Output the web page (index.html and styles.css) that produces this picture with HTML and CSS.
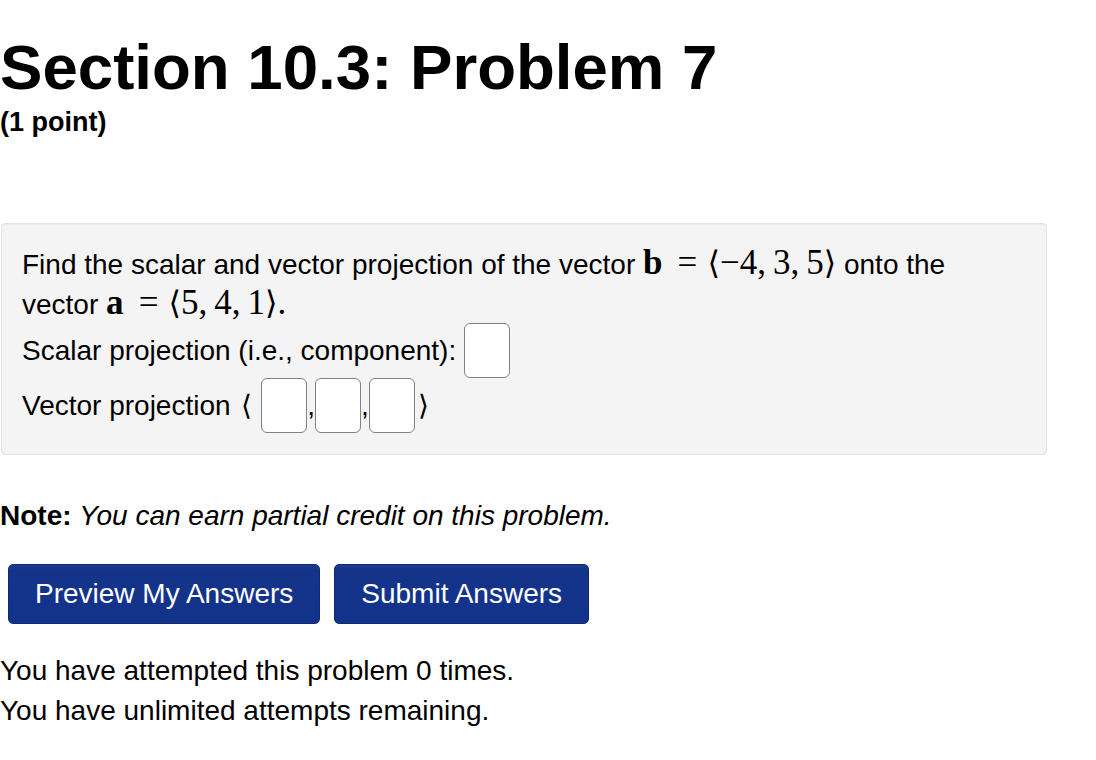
FILE: index.html
```html
<!DOCTYPE html>
<html lang="en">
<head>
<meta charset="utf-8">
<title>Section 10.3: Problem 7</title>
<link rel="stylesheet" href="styles.css">
</head>
<body>
<main class="page">
  <h1 class="title">Section 10.3: Problem 7</h1>
  <div class="points">(1 point)</div>

  <div class="problem">
    <p class="statement"><span>Find the scalar and vector projection of the vector</span> <span class="math"><b class="mb">b</b><span class="rel">=</span><span class="ang">⟨</span><span class="mn">−4,</span><span class="thin"></span><span class="mn">3,</span><span class="thin"></span><span class="mn">5</span><span class="ang">⟩</span></span> <span>onto the</span> <span>vector</span> <span class="math"><b class="mb">a</b><span class="rel">=</span><span class="ang">⟨</span><span class="mn">5,</span><span class="thin"></span><span class="mn">4,</span><span class="thin"></span><span class="mn">1</span><span class="ang">⟩</span><span class="mn">.</span></span></p>
    <div class="row">Scalar projection (i.e., component): <input class="ans" type="text" aria-label="scalar projection"></div>
    <div class="row">Vector projection <span class="br">⟨</span> <input class="ans" type="text" aria-label="x">,<input class="ans" type="text" aria-label="y">,<input class="ans" type="text" aria-label="z"><span class="br">⟩</span></div>
  </div>

  <p class="note"><b>Note:</b> <i>You can earn partial credit on this problem.</i></p>

  <div class="buttons">
    <button class="btn" type="button">Preview My Answers</button>
    <button class="btn" type="button">Submit Answers</button>
  </div>

  <div class="attempts">
    <div>You have attempted this problem 0 times.</div>
    <div>You have unlimited attempts remaining.</div>
  </div>
</main>
</body>
</html>
```

FILE: styles.css
```css
html, body {
  margin: 0;
  padding: 0;
  background: #ffffff;
}

body {
  font-family: "Liberation Sans", Arial, Helvetica, sans-serif;
  font-size: 28px;
  line-height: 40px;
  color: #000;
}

.page {
  width: 1048px;
}

.title {
  margin: 31px 0 0 0;
  font-size: 63.6px;
  line-height: 72px;
  font-weight: bold;
}

.points {
  margin-top: 3px;
  font-size: 27px;
  line-height: 32px;
  font-weight: bold;
}

.problem {
  margin: 85px 0 0 1px;
  width: 1004px;
  padding: 21px 20px 19px 20px;
  background: #f4f4f4;
  border: 1px solid #e2e2e2;
  border-radius: 4px;
  box-shadow: inset 0 1px 1px rgba(0, 0, 0, 0.04);
}

.statement {
  margin: 0;
}

.math {
  font-family: "Liberation Serif", "DejaVu Serif", serif;
  font-size: 35px;
  line-height: 1;
  white-space: nowrap;
}

.mb {
  font-weight: bold;
}

.rel {
  display: inline-block;
  margin: 0 7px 0 12px;
  width: 26px;
  text-align: center;
}

.ang {
  font-family: "DejaVu Serif", serif;
  font-size: 32px;
  font-weight: 200;
}

.thin {
  display: inline-block;
  width: 7px;
}

.row {
  white-space: nowrap;
}

.br {
  display: inline-block;
  margin: 0 1px 0 3px;
}

.ans {
  box-sizing: border-box;
  width: 46px;
  height: 55px;
  margin: 0;
  padding: 0 4px;
  vertical-align: middle;
  position: relative;
  top: -2px;
  border: 1.5px solid #808080;
  border-radius: 6px;
  background: #fff;
  font: inherit;
}

.note {
  margin: 41px 0 0 0;
}

.buttons {
  display: flex;
  gap: 14px;
  margin-top: 28px;
  padding-left: 8px;
}

.btn {
  height: 60px;
  padding: 0 26px;
  font-family: "Liberation Sans", Arial, Helvetica, sans-serif;
  font-size: 28px;
  color: #fff;
  background: linear-gradient(#1b3c8e, #14348a 8%, #13328a);
  border: 1px solid #0f2a70;
  border-radius: 5px;
}

.attempts {
  margin-top: 27px;
}
```
